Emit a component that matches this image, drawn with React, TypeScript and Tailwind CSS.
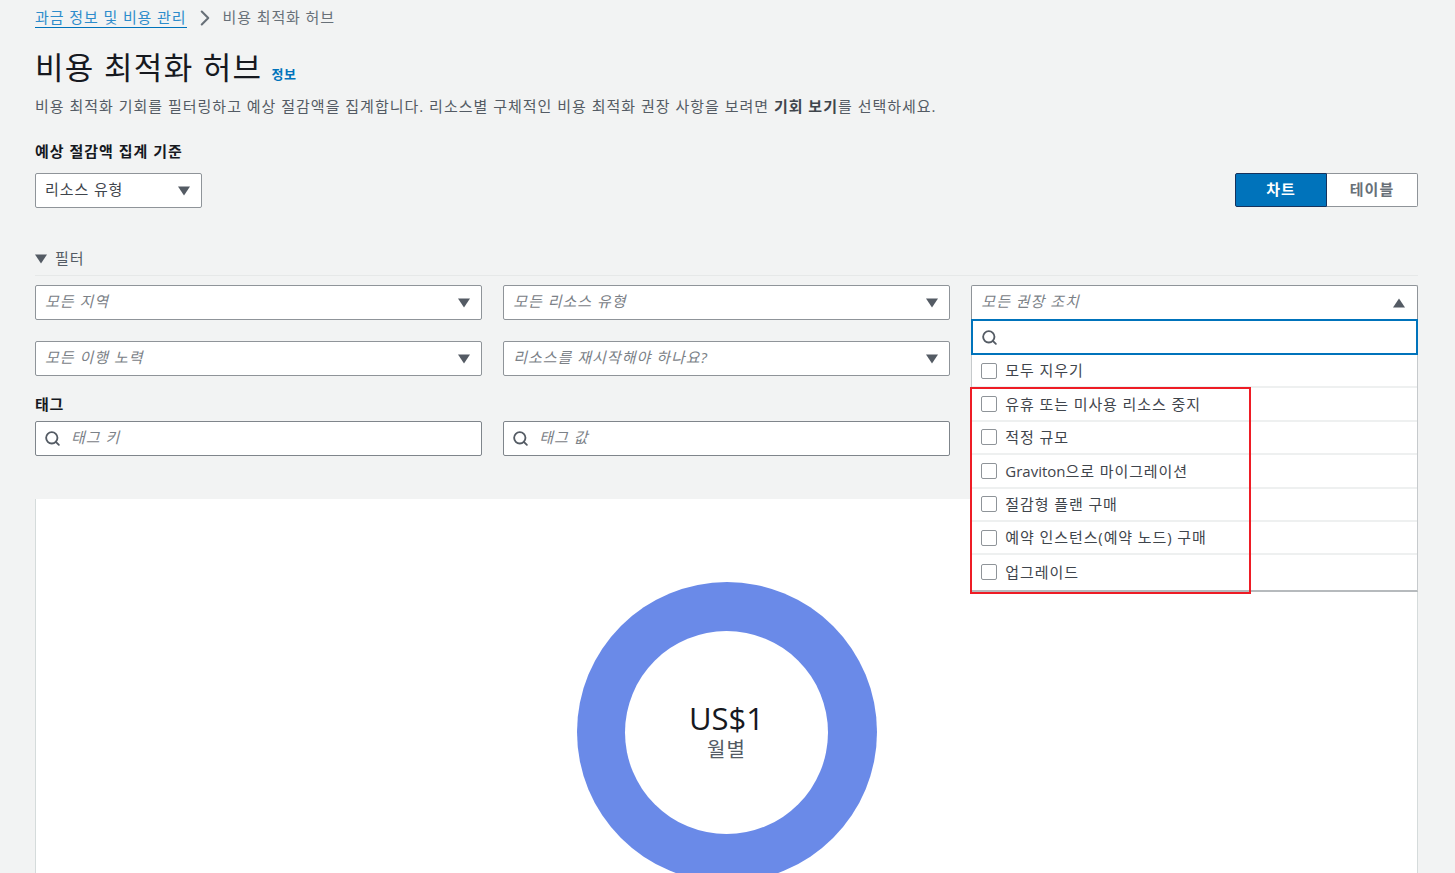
import { ChevronRight, Search } from "lucide-react"

const font = "font-['Open_Sans','Noto_Sans_CJK_KR',sans-serif]"

const options = [
  "유휴 또는 미사용 리소스 중지",
  "적정 규모",
  "Graviton으로 마이그레이션",
  "절감형 플랜 구매",
  "예약 인스턴스(예약 노드) 구매",
  "업그레이드",
]

function Caret({ up = false }: { up?: boolean }) {
  return (
    <svg width="12" height="10" viewBox="0 0 12 10" className="shrink-0">
      <path d={up ? "M6 0.5 L12 9.5 L0 9.5 Z" : "M0 0.5 L12 0.5 L6 9.5 Z"} fill="#545b64" />
    </svg>
  )
}

function Select({ label }: { label: string }) {
  return (
    <div className="flex h-[35px] items-center justify-between rounded-[2px] border border-[#8f9499] bg-white pl-[9px] pr-[11px]">
      <span className="pb-[2px] text-[15px] italic tracking-[1px] text-[#7b8187]">{label}</span>
      <Caret />
    </div>
  )
}

function TagInput({ label }: { label: string }) {
  return (
    <div className="flex h-[35px] items-center gap-[10px] rounded-[2px] border border-[#7f858b] bg-white pl-[8px]">
      <Search size={17} strokeWidth={2.6} className="text-[#545b64]" />
      <span className="pb-[2px] text-[15px] italic tracking-[1px] text-[#7b8187]">{label}</span>
    </div>
  )
}

function Option({ label, line = true }: { label: string; line?: boolean }) {
  return (
    <div className={`flex h-[33.4px] items-center gap-[8px] pl-[9px] ${line ? "border-b-2 border-[#eef0f0]" : ""}`}>
      <span className="h-[16px] w-[16px] rounded-[2px] border border-[#8f9499] bg-white" />
      <span className="text-[15px] tracking-[0.9px] text-[#3f454c]">
        {label.startsWith("Graviton") ? (
          <>
            <span className="tracking-normal">Graviton</span>
            {label.slice(8)}
          </>
        ) : (
          label
        )}
      </span>
    </div>
  )
}

export default function App() {
  return (
    <div className={`h-[873px] w-full overflow-hidden bg-[#f2f3f3] pl-[35px] pr-[37px] ${font}`}>
      <nav className="flex h-[35px] items-center text-[15px] tracking-[0.9px]">
        <a className="border-b border-[#0073bb] leading-[20px] text-[#2d8ccb]">과금 정보 및 비용 관리</a>
        <ChevronRight size={26} strokeWidth={1.9} className="mx-[5px] text-[#687078]" />
        <span className="text-[#687078]">비용 최적화 허브</span>
      </nav>

      <div className="mt-[12px] flex h-[40px] items-center">
        <h1 className="text-[31px] font-normal leading-[40px] tracking-[1.3px] text-[#16191f]">비용 최적화 허브</h1>
        <a className="ml-[9px] mt-[15px] text-[13px] font-semibold tracking-[0.5px] text-[#0073bb]">정보</a>
      </div>
      <p className="mt-[9px] text-[15px] leading-[20px] tracking-[0.99px] text-[#545b64]">
        비용 최적화 기회를 필터링하고 예상 절감액을 집계합니다. 리소스별 구체적인 비용 최적화 권장 사항을 보려면{" "}
        <b className="font-bold text-[#3f454c]">기회 보기</b>를 선택하세요.
      </p>

      <div className="mt-[25px] text-[15px] font-bold leading-[20px] tracking-[1px] text-[#16191f]">예상 절감액 집계 기준</div>
      <div className="mt-[12px] flex items-center justify-between">
        <div className="flex h-[35px] w-[167px] items-center justify-between rounded-[2px] border border-[#8f9499] bg-white pl-[9px] pr-[11px]">
          <span className="pb-[2px] text-[15px] tracking-[0.9px] text-[#3f454c]">리소스 유형</span>
          <Caret />
        </div>
        <div className="flex h-[35px] w-[183px] pb-[1px] text-[15px] font-bold tracking-[1px]">
          <div className="flex w-[92px] items-center justify-center rounded-l-[2px] border border-[#16325c] bg-[#0073bb] pb-[2px] text-white">차트</div>
          <div className="flex flex-1 items-center justify-center rounded-r-[2px] border border-l-0 border-[#8f9499] bg-white pb-[2px] text-[#687078]">테이블</div>
        </div>
      </div>

      <div className="mt-[41px] flex h-[27px] items-center gap-[8px] border-b border-[#e6e8e8] pb-[7px]">
        <Caret />
        <span className="text-[15px] tracking-[0.9px] text-[#545b64]">필터</span>
      </div>

      <div className="mt-[9px] grid grid-cols-3 gap-x-[21.5px] gap-y-[21px]">
        <Select label="모든 지역" />
        <Select label="모든 리소스 유형" />
        <div className="relative z-10">
          <div className="flex h-[35px] items-center justify-between rounded-t-[2px] border border-b-0 border-[#8f9499] bg-white pl-[9px] pr-[12px]">
            <span className="pb-[3px] text-[15px] italic tracking-[1px] text-[#7b8187]">모든 권장 조치</span>
            <Caret up />
          </div>
          <div className="absolute inset-x-0 top-[34px] bg-white">
            <div className="flex h-[36px] items-center border-2 border-[#0073bb] bg-white pl-[8px]">
              <Search size={17} strokeWidth={2.6} className="text-[#545b64]" />
            </div>
            <div className="relative border-x border-b-2 border-x-[#c6cacc] border-b-[#b6babd] pb-[1.5px]">
              <Option label="모두 지우기" />
              {options.map((o, i) => (
                <Option key={o} label={o} line={i < options.length - 1} />
              ))}
              <div className="absolute left-[-2px] top-[32px] h-[207px] w-[281px] border-2 border-[#ee1c25]" />
            </div>
          </div>
        </div>
        <Select label="모든 이행 노력" />
        <Select label="리소스를 재시작해야 하나요?" />
      </div>

      <div className="mt-[18px] text-[15px] font-bold leading-[20px] tracking-[0.6px] text-[#16191f]">태그</div>
      <div className="mt-[7px] grid grid-cols-3 gap-x-[21.5px]">
        <TagInput label="태그 키" />
        <TagInput label="태그 값" />
      </div>

      <section className="mt-[43px] flex h-[500px] justify-center border-x border-[#d5dbdb] bg-white pt-[83px]">
        <div className="flex h-[300px] w-[300px] shrink-0 items-center justify-center rounded-full bg-[#6a8ae8]">
          <div className="flex h-[203px] w-[203px] flex-col items-center justify-center rounded-full bg-white">
            <span className="text-[31px] leading-[34px] text-[#16191f]">US$1</span>
            <span className="mt-[2px] text-[20px] leading-[26px] tracking-[1px] text-[#545b64]">월별</span>
          </div>
        </div>
      </section>
    </div>
  )
}
